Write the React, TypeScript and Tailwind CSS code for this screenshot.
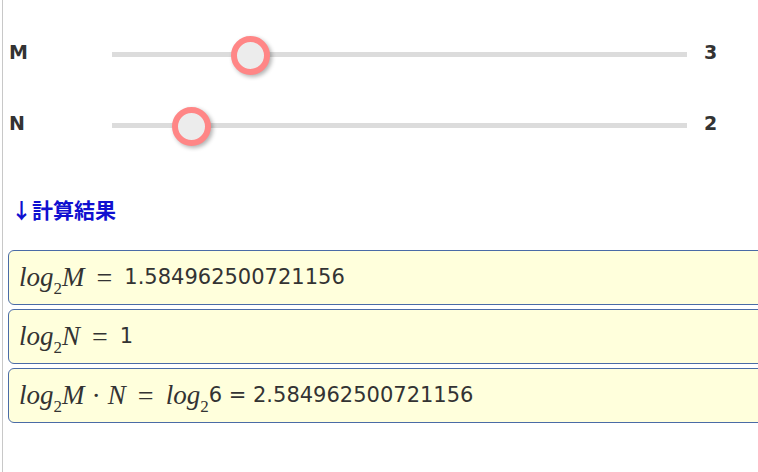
import React from "react";

const SANS = "font-['DejaVu_Sans','Verdana',sans-serif]";
const MATH = "font-['Liberation_Serif','Times_New_Roman',serif] italic text-[27px]";

function Slider({ label, value }: { label: string; value: number }) {
  // range 1..10, thumb 39px
  const pct = (value - 1) / 9;
  return (
    <div className="flex h-[71px] items-center">
      <div className={`w-[104px] pl-[1px] text-[19px] font-bold leading-[20px] text-[#333] ${SANS} -mt-[5px]`}>{label}</div>
      <div className="relative h-[5px] w-[575px] bg-[#dcdcdc]">
        <div
          className="absolute top-[-16px] h-[39px] w-[39px] rounded-full border-[6px] border-[#ff8686] bg-[#ececec] shadow-[2px_2px_4px_rgba(0,0,0,0.3)]"
          style={{ left: `${pct * (575 - 39)}px` }}
        />
      </div>
      <div className={`pl-[17px] text-[19px] font-bold leading-[20px] text-[#333] ${SANS} -mt-[5px]`}>{value}</div>
    </div>
  );
}

function Log({ sub = "2" }: { sub?: string }) {
  return (
    <span className={MATH}>
      log<sub className="not-italic text-[17px] align-[-3px]">{sub}</sub>
    </span>
  );
}

function Eq({ sym = "=", mx = "mx-[12px]" }: { sym?: string; mx?: string }) {
  return <span className={`${mx} font-['Liberation_Serif',serif] text-[28px]`}>{sym}</span>;
}

function Box({ children }: { children: React.ReactNode }) {
  return (
    <div className="flex h-[55px] w-[780px] items-center rounded-[6px] border border-[#4a6ba6] bg-[#ffffdc] pl-[10px] text-[21px] text-[#333]">
      {children}
    </div>
  );
}

export default function App() {
  const M = 3;
  const N = 2;
  return (
    <div className="h-[472px] w-[758px] overflow-hidden bg-white">
      <div className="ml-[2px] h-full border-l border-[#c8c8c8] pl-[5px]">
        <div className="pt-[19px]">
          <Slider label="M" value={M} />
          <Slider label="N" value={N} />
        </div>
        <div className="mt-[34px] pl-[3px] font-['Noto_Sans_CJK_JP',sans-serif] text-[21px] leading-[28px] font-bold text-[#1010d0]">
          ↓計算結果
        </div>
        <div className="mt-[27px] flex flex-col gap-[4px]">
          <Box>
            <Log />
            <span className={MATH}>M</span>
            <Eq />
            <span className={SANS}>{Math.log2(M)}</span>
          </Box>
          <Box>
            <Log />
            <span className={MATH}>N</span>
            <Eq />
            <span className={SANS}>{Math.log2(N)}</span>
          </Box>
          <Box>
            <Log />
            <span className={MATH}>M</span>
            <Eq sym="·" mx="mx-[7px]" />
            <span className={MATH}>N</span>
            <Eq />
            <Log />
            <span className={SANS}>
              {M * N} = {Math.log2(M * N)}
            </span>
          </Box>
        </div>
      </div>
    </div>
  );
}
